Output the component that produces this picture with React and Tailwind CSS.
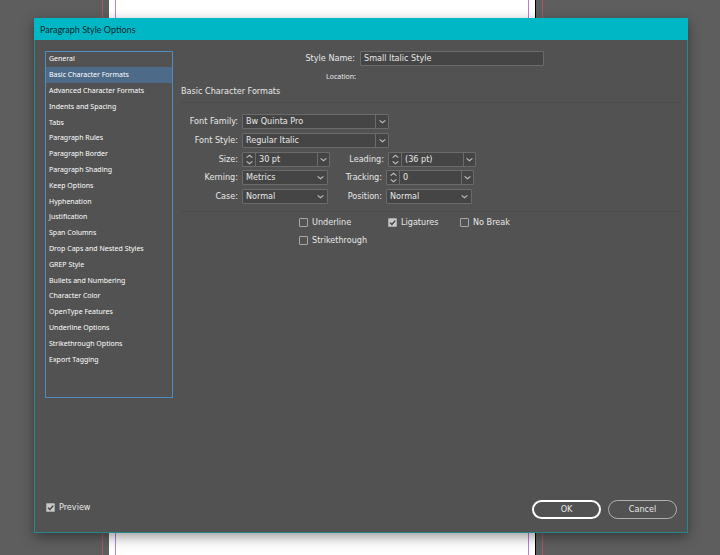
import React from "react";

const sections = [
  "General",
  "Basic Character Formats",
  "Advanced Character Formats",
  "Indents and Spacing",
  "Tabs",
  "Paragraph Rules",
  "Paragraph Border",
  "Paragraph Shading",
  "Keep Options",
  "Hyphenation",
  "Justification",
  "Span Columns",
  "Drop Caps and Nested Styles",
  "GREP Style",
  "Bullets and Numbering",
  "Character Color",
  "OpenType Features",
  "Underline Options",
  "Strikethrough Options",
  "Export Tagging",
];

const box = "border border-[#6b6b6b] bg-[#454545] rounded-[1px]";

function Chevron({ up }) {
  return (
    <svg width="7" height="5" viewBox="0 0 7 5" className="block" aria-hidden="true">
      <path
        d={up ? "M0.6 3.6 L3.5 1.3 L6.4 3.6" : "M0.6 1.4 L3.5 3.7 L6.4 1.4"}
        fill="none"
        stroke="#bdbdbd"
        strokeWidth="1.2"
      />
    </svg>
  );
}

function FieldLabel({ htmlFor, children, className }) {
  return (
    <label htmlFor={htmlFor} className={`shrink-0 text-right ${className}`}>
      {children}
    </label>
  );
}

function Select({ id, value, className, split }) {
  return (
    <div className={`relative flex h-[15px] ${box} ${className}`}>
      <select id={id} defaultValue={value} className="w-full appearance-none bg-transparent pl-[3px] outline-none">
        <option>{value}</option>
      </select>
      <span
        className={`pointer-events-none absolute inset-y-0 right-0 flex w-[13px] items-center justify-center ${
          split ? "border-l border-[#6b6b6b]" : ""
        }`}
      >
        <Chevron />
      </span>
    </div>
  );
}

function Stepper({ id, value }) {
  return (
    <div className={`flex h-[15px] w-[88px] ${box}`}>
      <div className="flex w-[13px] shrink-0 flex-col items-center justify-center gap-px border-r border-[#6b6b6b]">
        <button type="button" aria-label="Increase">
          <Chevron up />
        </button>
        <button type="button" aria-label="Decrease">
          <Chevron />
        </button>
      </div>
      <input id={id} defaultValue={value} className="w-0 flex-1 bg-transparent pl-[3px] outline-none" />
      <button
        type="button"
        aria-label="Choose a value"
        className="flex w-[12px] shrink-0 items-center justify-center border-l border-[#6b6b6b]"
      >
        <Chevron />
      </button>
    </div>
  );
}

function Check({ label, checked, className = "" }) {
  return (
    <label className={`flex items-center gap-1 ${className}`}>
      <span className="relative flex">
        <input
          type="checkbox"
          defaultChecked={checked}
          className="peer size-[9px] appearance-none rounded-[1px] border border-[#a8a8a8] checked:bg-[#c8c8c8]"
        />
        <svg
          viewBox="0 0 9 9"
          className="pointer-events-none absolute inset-0 hidden size-[9px] peer-checked:block"
          aria-hidden="true"
        >
          <path d="M2 4.6 L3.9 6.5 L7.2 2.6" fill="none" stroke="#3c3c3c" strokeWidth="1.3" />
        </svg>
      </span>
      {label}
    </label>
  );
}

function Canvas() {
  return (
    <div className="absolute inset-0 flex justify-center bg-[#5e5e5e]" aria-hidden="true">
      <div className="w-[102px] shrink-0" />
      <div className="w-px shrink-0 bg-[#a85a62]" />
      <div className="w-[6px] shrink-0" />
      <div className="w-[6px] shrink-0 bg-white" />
      <div className="w-px shrink-0 bg-[#b57cf0]" />
      <div className="flex-1 bg-white" />
      <div className="w-px shrink-0 bg-[#b57cf0]" />
      <div className="w-[6px] shrink-0 bg-white" />
      <div className="w-px shrink-0 bg-black" />
      <div className="w-[6px] shrink-0" />
      <div className="w-px shrink-0 bg-[#a85a62]" />
      <div className="w-[177px] shrink-0" />
    </div>
  );
}

export default function App() {
  return (
    <div className="relative flex min-h-screen flex-col pt-[18px] pr-8 pb-[22px] pl-[34px] font-['DejaVu_Sans_Condensed','DejaVu_Sans',sans-serif] text-[9px] leading-[13px] text-[#e8e8e8]">
      <Canvas />
      <main className="relative flex flex-1 flex-col border border-[#24888c] bg-[#525252] shadow-[0_4px_12px_rgba(0,0,0,0.4)]">
        <header className="-mx-px -mt-px flex h-[22px] items-center bg-[#00b8c5] pl-[6px] font-['Lato',sans-serif] text-[#06272c]">
          <h1>Paragraph Style Options</h1>
        </header>

        <div className="flex gap-2 pt-[11px] pl-[10px]">
          <nav className="h-[347px] w-[128px] shrink-0 px-px inset-ring inset-ring-[#4f8cc4]">
            <ul className="grid h-[316px] auto-rows-fr font-['Noto_Sans',sans-serif] text-[7px] leading-[15px] text-white">
              {sections.map((name, i) => (
                <li key={name} className={`flex items-center pl-[3px] ${i === 1 ? "bg-[#4d6a89]" : ""}`}>
                  <a href="#formats">{name}</a>
                </li>
              ))}
            </ul>
          </nav>

          <form className="min-w-0 flex-1">
            <div className="flex items-center gap-[5px]">
              <FieldLabel htmlFor="style-name" className="w-[174px]">
                Style Name:
              </FieldLabel>
              <input
                id="style-name"
                defaultValue="Small Italic Style"
                className={`h-[15px] w-[184px] pb-px pl-[3px] outline-none ${box}`}
              />
            </div>
            <p className="mt-1 w-[175px] text-right font-['Noto_Sans',sans-serif] text-[7px]">Location:</p>
            <h2 id="formats" className="mt-[2px]">Basic Character Formats</h2>
            <hr className="mt-1 mr-[6px] border-[#4b4b4b]" />

            <div className="mt-[11px] flex h-[90px] flex-col justify-between">
              <div className="flex items-center gap-1">
                <FieldLabel htmlFor="family" className="w-[57px]">Font Family:</FieldLabel>
                <Select id="family" value="Bw Quinta Pro" className="w-[147px]" split />
              </div>
              <div className="flex items-center gap-1">
                <FieldLabel htmlFor="fstyle" className="w-[57px]">Font Style:</FieldLabel>
                <Select id="fstyle" value="Regular Italic" className="w-[147px]" split />
              </div>
              <div className="flex items-center gap-1">
                <FieldLabel htmlFor="size" className="w-[57px]">Size:</FieldLabel>
                <Stepper id="size" value="30 pt" />
                <FieldLabel htmlFor="leading" className="w-[50px]">Leading:</FieldLabel>
                <Stepper id="leading" value="(36 pt)" />
              </div>
              <div className="flex items-center gap-1">
                <FieldLabel htmlFor="kerning" className="w-[57px]">Kerning:</FieldLabel>
                <Select id="kerning" value="Metrics" className="w-[86px]" />
                <FieldLabel htmlFor="tracking" className="w-[50px]">Tracking:</FieldLabel>
                <Stepper id="tracking" value="0" />
              </div>
              <div className="flex items-center gap-1">
                <FieldLabel htmlFor="case" className="w-[57px]">Case:</FieldLabel>
                <Select id="case" value="Normal" className="w-[86px]" />
                <FieldLabel htmlFor="position" className="w-[50px]">Position:</FieldLabel>
                <Select id="position" value="Normal" className="w-[86px]" />
              </div>
            </div>

            <hr className="mt-[7px] mr-[6px] border-[#4b4b4b]" />
            <div className="mt-1 ml-[118px] grid grid-cols-[89px_72px_auto] gap-y-[5px]">
              <Check label="Underline" />
              <Check label="Ligatures" checked />
              <Check label="No Break" />
              <Check label="Strikethrough" />
            </div>
          </form>
        </div>

        <footer className="mt-auto flex items-center justify-between pr-[10px] pb-[13px] pl-[11px]">
          <Check label="Preview" checked className="mb-1" />
          <div className="flex gap-[7px]">
            <button type="button" className="h-[19px] w-[69px] rounded-full border-2 border-white">
              OK
            </button>
            <button type="button" className="h-[19px] w-[69px] rounded-full border border-[#b0b0b0]">
              Cancel
            </button>
          </div>
        </footer>
      </main>
    </div>
  );
}
